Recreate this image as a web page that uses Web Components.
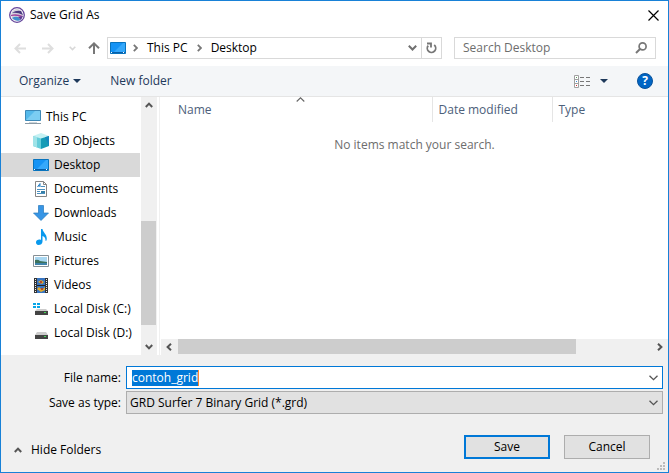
<!DOCTYPE html>
<html lang="en">
<head>
<meta charset="utf-8">
<title>Save Grid As</title>
<style>
    html, body {
        height: 100%;
        margin: 0;
    }
    body {
        font: 12px/16px "Open Sans", "Noto Sans", sans-serif;
        color: #000;
    }
</style>
</head>
<body>
<save-dialog></save-dialog>

<script>
// [width, height, svg content]
const icons = {
    app: [16, 16, `
        <circle cx="8" cy="8" r="7.3" fill="#fff" stroke="#65459b" stroke-width="1.3"/>
        <circle cx="8" cy="8" r="5.9" fill="#d3d0dc"/>
        <path d="M3 6Q7 3 12 4L14 8Q8 5 3 6Z" fill="#4a3a80"/>
        <path d="M2 8Q7 6 14 9L12 10Q7 8 2 9Z" fill="#a13f9c"/>
        <path d="M3 11Q6 9 9 10L12 13Q7 15 3 11Z" fill="#3d8fce"/>
        <path d="M9 10L14 9L12 13Z" fill="#5c3c96"/>`],
    close: [11, 11, `<path d="M.5.5L10.5 10.5M10.5.5L.5 10.5" stroke="#000" stroke-width="1.2"/>`],
    back: [12, 11, `<path d="M12 5.5H1.5M6 1L1.5 5.5L6 10" fill="none" stroke="#dedede" stroke-width="2"/>`],
    forward: [12, 11, `<path d="M0 5.5H10.5M6 1L10.5 5.5L6 10" fill="none" stroke="#dedede" stroke-width="2"/>`],
    recent: [7, 5, `<path d="M.7.7L3.5 3.5L6.3.7" fill="none" stroke="#d8d8d8" stroke-width="1.6"/>`],
    up: [12, 12, `<path d="M6 12V1.5M1 6.3L6 1.4L11 6.3" fill="none" stroke="#777" stroke-width="2"/>`],
    crumb: [5, 8, `<path d="M.8.8L4 4L.8 7.2" fill="none" stroke="#777" stroke-width="1.8"/>`],
    down: [9, 6, `<path d="M.8.8L4.5 4.5L8.2.8" fill="none" stroke="#707070" stroke-width="2"/>`],
    combo: [9, 6, `<path d="M.5.7L4.5 4.7L8.5.7" fill="none" stroke="#555" stroke-width="1.3"/>`],
    sort: [9, 5, `<path d="M.7 4.5L4.5.8L8.3 4.5" fill="none" stroke="#666" stroke-width="1.1"/>`],
    refresh: [11, 12, `<path d="M8.200 3A4.200 4.200 0 1 1 2.200 3.600" fill="none" stroke="#777" stroke-width="1.800"/><path d="M1 1.500H5V5.500" fill="none" stroke="#777" stroke-width="1.800"/>`],
    search: [12, 12, `<circle cx="7.6" cy="4.4" r="3.5" fill="none" stroke="#777" stroke-width="1.7"/><path d="M5 7L1 11" stroke="#777" stroke-width="2"/>`],
    caret: [8, 4, `<path d="M0 0H8L4 4Z" fill="#1e395b"/>`],
    view: [16, 13, `
        <path d="M.5.5H4.5V12.5H.5ZM.5 4.5H4.5M.5 8.5H4.5" fill="#fff" stroke="#a0a0a0"/>
        <path d="M2 2H3V3H2Z" fill="#5b9c5b"/><path d="M2 6H3V7H2Z" fill="#3c8de0"/><path d="M2 10H3V11H2Z" fill="#d12c2c"/>
        <path d="M6 2.5H10M12 2.5H16M6 6.5H10M12 6.5H16M6 10.5H10M12 10.5H16" stroke="#777"/>`],
    pc: [16, 16, `
        <path d="M.5 1.5H15.5V11.5H.5Z" fill="#55b9ea" stroke="#3d88b6"/><path d="M1 11L10 2H15V11Z" fill="#7bcdf2"/>
        <path d="M4 13H12V14H4Z" fill="#c9d3d9"/><path d="M0 14.5H16" stroke="#8b9aa5"/>`],
    cube: [16, 16, `
        <path d="M0 3L8 0L16 3L8 6Z" fill="#c5f1f3"/><path d="M0 3L8 5.5V16L0 13Z" fill="#65cdda"/>
        <path d="M8 5.5L16 3V13L8 16Z" fill="#159bb5"/><path d="M0 3L4 4.200V14.500L0 13Z" fill="#9fe3e8"/><path d="M12 4.200L16 3V13Z" fill="#1587bd"/>`],
    desktop: [16, 12, `
        <path d="M.5.5H15.5V11.5H.5Z" fill="#1593f5" stroke="#0873bd"/><path d="M4 10L13 1H15V10Z" fill="#35a8fb"/>
        <path d="M1 10.5H15" stroke="#075ea9"/><path d="M1 10.5H3M13 10.5H15" stroke="#fff" stroke-dasharray="1 1"/>`],
    document: [12, 16, `
        <path d="M.5.5H8.5L11.5 3.5V15.5H.5Z" fill="#fff" stroke="#858585"/><path d="M8.5.5V3.5H11.5" fill="none" stroke="#858585"/>
        <path d="M2.5 6L5 2.5V6M3 4.8H5" fill="none" stroke="#267fc4"/>
        <path d="M6 5.5H10M2 8.5H10M2 10.5H5M2 12.5H10" stroke="#4b90bf"/><path d="M6 10H10V12H6Z" fill="#367fa8"/>`],
    download: [16, 16, `<path d="M5.5.5H10.5V8H15.5L8 15.5L.5 8H5.5Z" fill="#3795e5" stroke="#2778bb" stroke-width=".7"/>`],
    music: [11, 16, `<path d="M5 0H6.5C7 4 12 5.500 10.500 11.500L9.500 12C9.800 8.500 8 7.500 6.500 7V12.500C6.500 15 4.500 16 2.500 16S0 14.500 0 13.300C0 11 3 10 5 11Z" fill="#0999ed"/>`],
    picture: [16, 12, `
        <path d="M.5.5H15.5V11.5H.5Z" fill="#fff" stroke="#858f95"/><path d="M2 2H14V10H2Z" fill="#a9d7f1"/>
        <path d="M2 5Q5 4 7 6L14 7V9H2Z" fill="#3d725d"/><path d="M2 8H14V10H2Z" fill="#3f83ab"/>`],
    video: [14, 15, `
        <path d="M0 0H14V15H0Z" fill="#333"/><path d="M3 0H11V15H3Z" fill="#3875c1"/>
        <path d="M1.500 1V15M12.500 1V15" stroke="#eee" stroke-dasharray="1 1"/>
        <path d="M4 4L7 2L10 4L8 6ZM3 11L5 9L8 12L11 9V12L7 14Z" fill="#e2aa2c"/><path d="M6 3H8V5H6ZM7 10H9V12H7Z" fill="#b6472c"/>
        <path d="M3 7.500H11" stroke="#222"/>`],
    windisk: [16, 14, `
        <path d="M0 1H3V3H0ZM4 1H7V3H4ZM0 4H3V6H0ZM4 4H7V6H4Z" fill="#08a6e8"/>
        <path d="M4 7H13L15 9H2Z" fill="#ccc"/><path d="M2 9H15V13H2Z" fill="#444"/><path d="M11 10.500H13" stroke="#42d957"/>`],
    disk: [16, 14, `
        <path d="M4 6H13L15 9H2Z" fill="#ccc"/><path d="M2 9H15V13H2Z" fill="#444"/><path d="M11 10.500H13" stroke="#42d957"/>`],
    barup: [8, 6, `<path d="M.8 5L4 1.600L7.200 5" fill="none" stroke="#555" stroke-width="2"/>`],
    bardown: [8, 6, `<path d="M.8 1L4 4.400L7.200 1" fill="none" stroke="#555" stroke-width="2"/>`],
    barleft: [6, 8, `<path d="M5 .8L1.600 4L5 7.200" fill="none" stroke="#555" stroke-width="2"/>`],
    barright: [6, 8, `<path d="M1 .8L4.400 4L1 7.200" fill="none" stroke="#555" stroke-width="2"/>`],
    grip: [8, 8, `<path d="M6 0H8V2H6ZM3 3H5V5H3ZM6 3H8V5H6ZM0 6H2V8H0ZM3 6H5V8H3ZM6 6H8V8H6Z" fill="#bbb"/>`]
};

class UiIcon extends HTMLElement {
    constructor() {
        super();
        this.attachShadow({mode: 'open'});
    }

    connectedCallback() {
        const [w, h, body] = icons[this.getAttribute('name')];
        this.shadowRoot.innerHTML = `
            <style>
                :host { display: inline-flex; flex: none; }
                svg { display: block; }
            </style>
            <svg width="${w}" height="${h}" viewBox="0 0 ${w} ${h}" aria-hidden="true">${body}</svg>
        `;
    }
}
customElements.define('ui-icon', UiIcon);

class TitleBar extends HTMLElement {
    constructor() {
        super();
        this.attachShadow({mode: 'open'}).innerHTML = `
            <style>
                :host {
                    display: flex;
                    align-items: center;
                    gap: 5px;
                    height: 28px;
                    padding: 0 9px 0 8px;
                }
                h1 { flex: 1; margin: 0; font: inherit; }
                button { display: flex; padding: 0; border: 0; background: none; }
            </style>
            <ui-icon name="app"></ui-icon>
            <h1><slot></slot></h1>
            <button aria-label="Close"><ui-icon name="close"></ui-icon></button>
        `;
    }
}
customElements.define('title-bar', TitleBar);

class NavBar extends HTMLElement {
    constructor() {
        super();
        this.attachShadow({mode: 'open'}).innerHTML = `
            <style>
                :host {
                    display: flex;
                    align-items: center;
                    gap: 12px;
                    padding: 8px 12px 7px 13px;
                }
                button {
                    display: flex;
                    align-items: center;
                    justify-content: center;
                    padding: 0;
                    border: 0;
                    background: none;
                }
                .arrows { display: flex; align-items: center; gap: 16px; margin-right: -5px; }
                .arrows .recent { margin: 0 -4px 0 -1px; }
                .box {
                    display: flex;
                    align-items: center;
                    box-sizing: border-box;
                    height: 22px;
                    border: 1px solid #d9d9d9;
                }
                .address { flex: 331; padding-left: 2px; }
                .address a { color: inherit; text-decoration: none; margin: 0 9px; }
                .address .first { margin-left: 7px; }
                .address .drop { width: 18px; margin-left: auto; }
                .address .reload { width: 20px; height: 20px; border-left: 1px solid #d9d9d9; }
                .search { flex: 184; padding: 0 8px; }
                input {
                    flex: 1;
                    min-width: 0;
                    padding: 0;
                    border: 0;
                    outline: 0;
                    font: inherit;
                }
                input::placeholder { color: #6d6d6d; }
            </style>
            <div class="arrows">
                <button aria-label="Back"><ui-icon name="back"></ui-icon></button>
                <button aria-label="Forward"><ui-icon name="forward"></ui-icon></button>
                <button class="recent" aria-label="Recent"><ui-icon name="recent"></ui-icon></button>
                <button aria-label="Up"><ui-icon name="up"></ui-icon></button>
            </div>
            <div class="box address">
                <ui-icon name="desktop"></ui-icon>
                <ui-icon class="first" name="crumb"></ui-icon>
                <a href="#pc">This PC</a>
                <ui-icon name="crumb"></ui-icon>
                <a href="#desktop">Desktop</a>
                <button class="drop" aria-label="Previous locations"><ui-icon name="down"></ui-icon></button>
                <button class="reload" aria-label="Refresh"><ui-icon name="refresh"></ui-icon></button>
            </div>
            <div class="box search">
                <input type="text" placeholder="Search Desktop" aria-label="Search">
                <button aria-label="Go"><ui-icon name="search"></ui-icon></button>
            </div>
        `;
    }
}
customElements.define('nav-bar', NavBar);

class ToolBar extends HTMLElement {
    constructor() {
        super();
        this.attachShadow({mode: 'open'}).innerHTML = `
            <style>
                :host {
                    display: flex;
                    align-items: center;
                    height: 30px;
                    padding: 0 15px 0 18px;
                    background: #f4f6f8;
                    border-bottom: 1px solid #e5e5e5;
                }
                button {
                    display: flex;
                    align-items: center;
                    gap: 4px;
                    padding: 0;
                    border: 0;
                    background: none;
                    font: inherit;
                    color: #1e395b;
                }
                .new { margin-left: 29px; }
                .view { gap: 10px; margin-left: auto; }
                .help {
                    justify-content: center;
                    width: 16px;
                    height: 16px;
                    margin-left: 29px;
                    border: 1px solid #0a529b;
                    border-radius: 50%;
                    background: #0065c4;
                    color: #fff;
                    font-weight: bold;
                }
            </style>
            <button>Organize <ui-icon name="caret"></ui-icon></button>
            <button class="new">New folder</button>
            <button class="view" aria-label="View"><ui-icon name="view"></ui-icon><ui-icon name="caret"></ui-icon></button>
            <button class="help">?</button>
        `;
    }
}
customElements.define('tool-bar', ToolBar);

class TreeItem extends HTMLElement {
    constructor() {
        super();
        this.attachShadow({mode: 'open'});
    }

    connectedCallback() {
        this.shadowRoot.innerHTML = `
            <style>
                :host {
                    display: flex;
                    align-items: center;
                    gap: 5px;
                    height: 24px;
                    padding-left: 32px;
                    white-space: nowrap;
                }
                :host([root]) { padding-left: 24px; }
                :host([selected]) { background: #d9d9d9; }
                .icon { display: flex; justify-content: center; width: 16px; }
            </style>
            <span class="icon"><ui-icon name="${this.getAttribute('icon')}"></ui-icon></span>
            <slot></slot>
        `;
    }
}
customElements.define('tree-item', TreeItem);

// track: shares of the bar before, in and after the thumb
class ScrollBar extends HTMLElement {
    constructor() {
        super();
        this.attachShadow({mode: 'open'});
    }

    connectedCallback() {
        const across = this.hasAttribute('horizontal');
        const [before, thumb, after] = this.getAttribute('track').split(' ');
        this.shadowRoot.innerHTML = `
            <style>
                :host {
                    display: flex;
                    flex-direction: ${across ? 'row' : 'column'};
                    flex: none;
                    ${across ? 'height: 16px' : 'width: 16px'};
                    background: #f0f0f0;
                }
                button {
                    display: flex;
                    align-items: center;
                    justify-content: center;
                    width: 16px;
                    height: 16px;
                    padding: 0;
                    border: 0;
                    background: none;
                }
                .before { flex: ${before}; }
                .thumb { flex: ${thumb}; background: #cdcdcd; ${across ? 'margin-bottom' : 'margin-right'}: 1px; }
                .after { flex: ${after}; }
            </style>
            <button aria-label="Scroll back"><ui-icon name="${across ? 'barleft' : 'barup'}"></ui-icon></button>
            <div class="before"></div>
            <div class="thumb"></div>
            <div class="after"></div>
            <button aria-label="Scroll on"><ui-icon name="${across ? 'barright' : 'bardown'}"></ui-icon></button>
        `;
    }
}
customElements.define('scroll-bar', ScrollBar);

class FolderTree extends HTMLElement {
    constructor() {
        super();
        this.attachShadow({mode: 'open'}).innerHTML = `
            <style>
                :host { display: flex; width: 156px; flex: none; background: #fff; }
                nav { flex: 1; padding-top: 8px; margin-right: 1px; }
            </style>
            <nav><slot></slot></nav>
            <scroll-bar track="108 104 14"></scroll-bar>
        `;
    }
}
customElements.define('folder-tree', FolderTree);

class FileList extends HTMLElement {
    constructor() {
        super();
        this.attachShadow({mode: 'open'}).innerHTML = `
            <style>
                :host {
                    display: flex;
                    flex-direction: column;
                    flex: 1;
                    min-width: 0;
                    margin-left: 2px;
                    border-left: 1px solid #f0f0f0;
                    padding-left: 1px;
                }
                .area { flex: 1; }
                table { width: 100%; table-layout: fixed; border-collapse: collapse; }
                th {
                    position: relative;
                    box-sizing: border-box;
                    height: 25px;
                    padding: 0 0 0 6px;
                    border-right: 1px solid #e5e5e5;
                    font-weight: normal;
                    text-align: left;
                    color: #4c607a;
                }
                th:first-child { padding-left: 17px; }
                th:nth-child(2) { width: 120px; }
                th:last-child { width: 116px; border: 0; }
                .sort { position: absolute; top: 0; left: 50%; }
                td { padding: 15px 0; text-align: center; color: #6d6d6d; }
            </style>
            <div class="area">
                <table>
                    <thead>
                        <tr><th>Name<ui-icon class="sort" name="sort"></ui-icon></th><th>Date modified</th><th>Type</th></tr>
                    </thead>
                    <tbody>
                        <tr><td colspan="3">No items match your search.</td></tr>
                    </tbody>
                </table>
            </div>
            <scroll-bar horizontal track="1 398 76"></scroll-bar>
        `;
    }
}
customElements.define('file-list', FileList);

class SaveForm extends HTMLElement {
    constructor() {
        super();
        this.attachShadow({mode: 'open'}).innerHTML = `
            <style>
                :host { display: block; padding: 11px 5px 13px 0; }
                .fields {
                    display: grid;
                    grid-template-columns: 120px 1fr;
                    column-gap: 5px;
                    row-gap: 2px;
                    align-items: center;
                }
                label { text-align: right; }
                .combo {
                    display: grid;
                    grid-template-columns: 1fr 17px;
                    align-items: center;
                    box-sizing: border-box;
                    height: 23px;
                    border: 1px solid #adadad;
                    background: #e1e1e1;
                }
                .combo.name { border-color: #0078d7; background: #fff; padding-left: 5px; }
                .combo > * { grid-row: 1; }
                input {
                    field-sizing: content;
                    justify-self: start;
                    height: 16px;
                    padding: 0;
                    border: 0;
                    border-right: 1px solid #ff8728;
                    outline: 0;
                    background: #0078d7;
                    color: #fff;
                    font: inherit;
                }
                .combo button { display: flex; justify-content: center; padding: 0; border: 0; background: none; }
                select {
                    appearance: none;
                    grid-column: 1 / 3;
                    height: 21px;
                    padding: 0 3px;
                    border: 0;
                    background: none;
                    color: inherit;
                    font: inherit;
                }
                .combo ui-icon { justify-self: center; pointer-events: none; }
                .combo > ui-icon { grid-column: 2; }
            </style>
            <div class="fields">
                <label for="name">File name:</label>
                <div class="combo name">
                    <input id="name" type="text" value="contoh_grid">
                    <button aria-label="Earlier names"><ui-icon name="combo"></ui-icon></button>
                </div>
                <label for="type">Save as type:</label>
                <div class="combo">
                    <select id="type"><option>GRD Surfer 7 Binary Grid (*.grd)</option></select>
                    <ui-icon name="combo"></ui-icon>
                </div>
            </div>
            <slot></slot>
        `;
    }
}
customElements.define('save-form', SaveForm);

class DialogActions extends HTMLElement {
    constructor() {
        super();
        this.attachShadow({mode: 'open'}).innerHTML = `
            <style>
                :host {
                    display: flex;
                    align-items: center;
                    gap: 14px;
                    margin-top: 21px;
                    padding: 0 13px;
                }
                button { font: inherit; color: inherit; }
                .hide {
                    display: flex;
                    align-items: center;
                    gap: 9px;
                    margin: 6px auto 0 0;
                    padding: 0;
                    border: 0;
                    background: none;
                }
                .action {
                    width: 86px;
                    height: 24px;
                    padding: 0;
                    border: 1px solid #adadad;
                    background: #e1e1e1;
                }
                .default { border: 2px solid #0078d7; }
            </style>
            <button class="hide"><ui-icon name="barup"></ui-icon>Hide Folders</button>
            <button class="action default">Save</button>
            <button class="action">Cancel</button>
        `;
    }
}
customElements.define('dialog-actions', DialogActions);

class SaveDialog extends HTMLElement {
    constructor() {
        super();
        this.attachShadow({mode: 'open'}).innerHTML = `
            <style>
                :host {
                    position: relative;
                    display: flex;
                    flex-direction: column;
                    box-sizing: border-box;
                    min-height: 100%;
                    border: 1px solid #1881d7;
                    background: #f0f0f0;
                }
                .top { background: #fff; }
                .panes { display: flex; flex: 1; background: #fff; }
                .grip { position: absolute; right: 3px; bottom: 2px; }
            </style>
            <div class="top">
                <title-bar>Save Grid As</title-bar>
                <nav-bar></nav-bar>
                <tool-bar></tool-bar>
            </div>
            <div class="panes">
                <folder-tree>
                    <tree-item root icon="pc">This PC</tree-item>
                    <tree-item icon="cube">3D Objects</tree-item>
                    <tree-item icon="desktop" selected>Desktop</tree-item>
                    <tree-item icon="document">Documents</tree-item>
                    <tree-item icon="download">Downloads</tree-item>
                    <tree-item icon="music">Music</tree-item>
                    <tree-item icon="picture">Pictures</tree-item>
                    <tree-item icon="video">Videos</tree-item>
                    <tree-item icon="windisk">Local Disk (C:)</tree-item>
                    <tree-item icon="disk">Local Disk (D:)</tree-item>
                </folder-tree>
                <file-list></file-list>
            </div>
            <save-form><dialog-actions></dialog-actions></save-form>
            <ui-icon class="grip" name="grip"></ui-icon>
        `;
    }
}
customElements.define('save-dialog', SaveDialog);
</script>
</body>
</html>
